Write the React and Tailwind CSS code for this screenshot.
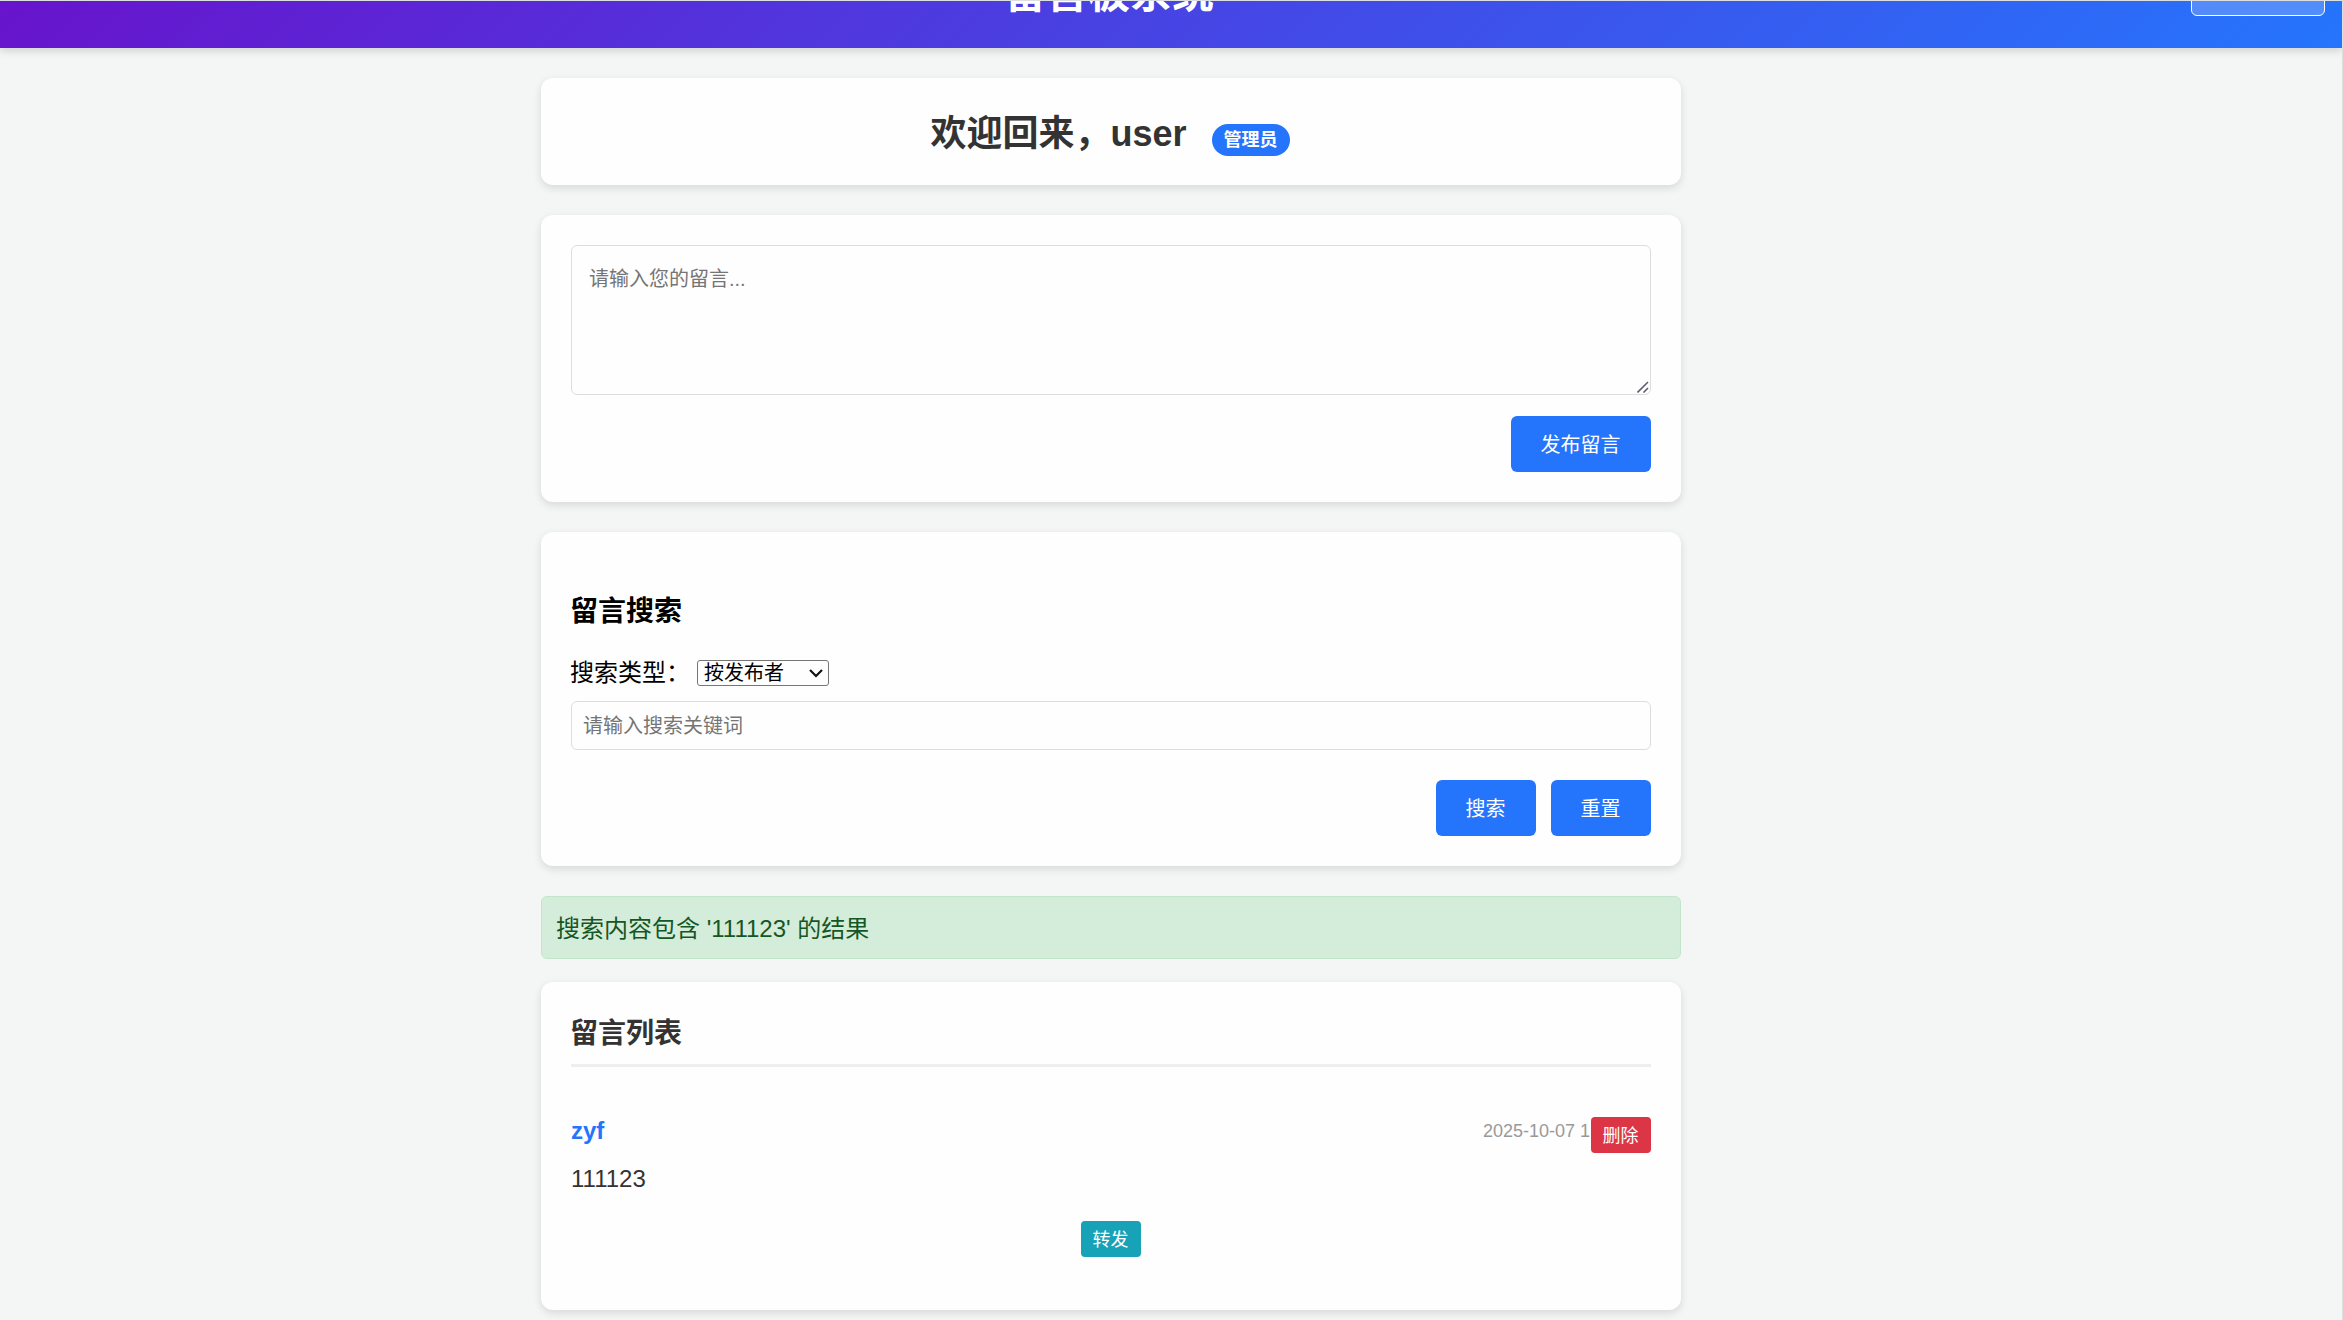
import React, { useState } from 'react';

const messages = [
  { id: 1, author: 'zyf', date: '2025-10-07 1', content: '111123' },
];

const cardClass = 'bg-[#fefefe] rounded-[12px] shadow-[0_3px_8px_rgba(0,0,0,0.12)]';
const primaryBtn = 'h-14 pt-[2px] pr-[1px] bg-[#2575fc] text-white text-[20px] leading-[30px] rounded-[6px]';

export default function App() {
  const [content, setContent] = useState('');
  const [searchType, setSearchType] = useState('user');
  const [keyword, setKeyword] = useState('');

  return (
    <div className="h-[1320px] overflow-hidden bg-[#f4f6f5] border-t border-r border-[#dcdfe0] font-['Liberation_Sans','Noto_Sans_CJK_SC',sans-serif] text-black">
      <header className="h-[47px] shadow-[0_3px_8px_rgba(0,0,0,0.15)]">
        {/* scrolled part of the header, only the lower edge is visible */}
        <div className="h-full overflow-hidden flex flex-col justify-end">
          <div className="h-[118px] shrink-0 bg-[linear-gradient(135deg,#6a11cb_0%,#2575fc_100%)] flex items-end pl-[539px] pr-[17px]">
            <h1 className="w-[1140px] text-center text-white text-[42px] leading-[60px] font-bold mb-[24px]">留言板系统</h1>
            <div className="ml-auto w-[134px] h-[56px] mb-[32px] rounded-[6px] border border-white bg-white/20" />
          </div>
        </div>
      </header>

      <main className="w-[1140px] ml-[541px] pt-[30px]">
        <section className={`${cardClass} h-[107px] mb-[30px] flex items-baseline justify-center pt-[29px] pr-[2px]`}>
          <h2 className="text-[36px] leading-[54px] font-bold text-[#333]">欢迎回来，user</h2>
          <span className="ml-[25px] h-8 px-3 rounded-full bg-[#2575fc] text-white text-[18px] leading-8 font-bold">管理员</span>
        </section>

        <section className={`${cardClass} h-[287px] mb-[30px] p-[30px]`}>
          <div className="relative h-[150px]">
            <textarea
              value={content}
              onChange={(e) => setContent(e.target.value)}
              placeholder="请输入您的留言..."
              className="block w-full h-[150px] resize-none border border-[#ddd] rounded-[6px] px-[17px] pt-[18px] text-[20px] leading-[30px] placeholder:text-[#757575]"
            />
            <svg className="absolute right-[2px] bottom-[2px]" width="12" height="12" viewBox="0 0 12 12" stroke="#5f5f70" strokeWidth="1.6">
              <path d="M0.5 11.5L11 1M6.5 11.5L11 7" />
            </svg>
          </div>
          <div className="flex justify-end mt-[21px]">
            <button className={`${primaryBtn} w-[140px]`}>发布留言</button>
          </div>
        </section>

        <section className={`${cardClass} h-[334px] mb-[30px] p-[30px]`}>
          <h3 className="text-[28px] leading-[42px] font-bold mt-[29px] -ml-px">留言搜索</h3>
          <div className="flex items-center h-9 mt-[22px]">
            <label className="w-[127px] -ml-px text-[24px] leading-9 whitespace-nowrap">搜索类型：</label>
            <div className="relative">
              <select
                value={searchType}
                onChange={(e) => setSearchType(e.target.value)}
                className="block w-[132px] h-[26px] appearance-none bg-[#fefefe] border border-[#767676] rounded-[3px] pl-[6px] text-[20px] leading-6"
              >
                <option value="user">按发布者</option>
                <option value="content">按内容</option>
              </select>
              <svg className="absolute right-[6px] top-[9px] pointer-events-none" width="14" height="9" viewBox="0 0 14 9" fill="none" stroke="#111" strokeWidth="2.2">
                <path d="M1 1L7 7L13 1" />
              </svg>
            </div>
          </div>
          <input
            value={keyword}
            onChange={(e) => setKeyword(e.target.value)}
            placeholder="请输入搜索关键词"
            className="block w-full h-[49px] mt-[10px] px-[11px] pt-px border border-[#ddd] rounded-[6px] text-[20px] placeholder:text-[#757575]"
          />
          <div className="flex justify-end gap-[15px] mt-[30px]">
            <button className={`${primaryBtn} w-[100px]`}>搜索</button>
            <button className={`${primaryBtn} w-[100px]`}>重置</button>
          </div>
        </section>

        <div className="h-[63px] mb-[23px] px-[14px] border border-[#c3e6cb] rounded-[6px] bg-[#d4ecda] text-[#155724] text-[24px] leading-[63px]">
          搜索内容包含 '111123' 的结果
        </div>

        <section className={`${cardClass} h-[328px] px-[30px] pt-[30px]`}>
          <h3 className="h-[55px] pt-px border-b-[3px] border-[#eee] text-[28px] leading-[42px] font-bold text-[#333]">
            <span className="-ml-px">留言列表</span>
          </h3>
          {messages.map(msg => (
            <div key={msg.id} className="pt-[50px]">
              <div className="flex items-start">
                <span className="text-[24px] leading-[28px] font-bold text-[#2575fc]">{msg.author}</span>
                <span className="ml-auto w-[108px] text-[18px] leading-[28px] text-[#999] whitespace-nowrap overflow-hidden">{msg.date}</span>
                <button className="w-[60px] h-9 pt-px pr-px rounded-[4px] bg-[#dc3545] text-white text-[18px] leading-9">删除</button>
              </div>
              <p className="mt-[8px] text-[24px] leading-9 text-[#333]">{msg.content}</p>
              <div className="flex justify-center mt-[24px]">
                <button className="w-[60px] h-9 pt-px pr-px rounded-[4px] bg-[#17a2b8] text-white text-[18px] leading-9">转发</button>
              </div>
            </div>
          ))}
        </section>
      </main>
    </div>
  );
}
